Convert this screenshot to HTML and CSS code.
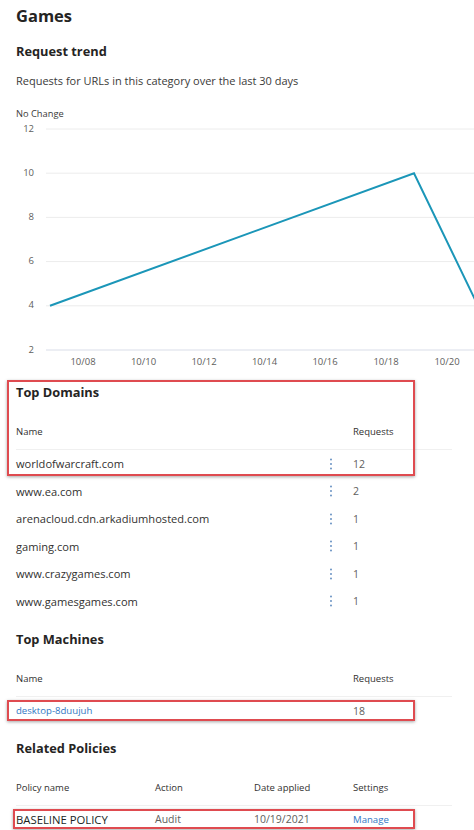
FILE: index.html
```html
<!DOCTYPE html>
<html lang="en">
<head>
<meta charset="utf-8">
<title>Games</title>
<link rel="stylesheet" href="styles.css">
</head>
<body>
<main class="page">
  <h1 class="title">Games</h1>
  <section class="trend">
    <h2 class="heading">Request trend</h2>
    <p class="subtitle">Requests for URLs in this category over the last 30 days</p>
    <div class="chart-label">No Change</div>
  </section>
  <svg class="chart" width="474" height="250" viewBox="0 0 474 250">
    <g class="grid">
      <line x1="46" y1="7" x2="474" y2="7"/>
      <line x1="46" y1="51.2" x2="474" y2="51.2"/>
      <line x1="46" y1="95.4" x2="474" y2="95.4"/>
      <line x1="46" y1="139.6" x2="474" y2="139.6"/>
      <line x1="46" y1="183.8" x2="474" y2="183.8"/>
    </g>
    <line class="axis" x1="46" y1="228" x2="474" y2="228"/>
    <g class="ylabels">
      <text x="34" y="7">12</text>
      <text x="34" y="51.2">10</text>
      <text x="34" y="95.4">8</text>
      <text x="34" y="139.6">6</text>
      <text x="34" y="183.8">4</text>
      <text x="34" y="228">2</text>
    </g>
    <g class="xlabels">
      <text x="83" y="240">10/08</text>
      <text x="143.5" y="240">10/10</text>
      <text x="204" y="240">10/12</text>
      <text x="264.5" y="240">10/14</text>
      <text x="325" y="240">10/16</text>
      <text x="386" y="240">10/18</text>
      <text x="447" y="240">10/20</text>
    </g>
    <polyline class="series" points="50,183.8 414,51.2 478,183.8"/>
  </svg>

  <section class="block domains">
    <div class="highlight hl-domains"></div>
    <h2 class="heading">Top Domains</h2>
    <div class="table cols-domains">
      <div class="row head"><span>Name</span><span></span><span>Requests</span></div>
      <div class="row"><span class="name">worldofwarcraft.com</span><span class="more"><svg width="4" height="14" viewBox="0 0 4 14"><circle cx="2" cy="2.5" r="0.9"/><circle cx="2" cy="7" r="0.9"/><circle cx="2" cy="11.5" r="0.9"/></svg></span><span class="num">12</span></div>
      <div class="row"><span class="name">www.ea.com</span><span class="more"><svg width="4" height="14" viewBox="0 0 4 14"><circle cx="2" cy="2.5" r="0.9"/><circle cx="2" cy="7" r="0.9"/><circle cx="2" cy="11.5" r="0.9"/></svg></span><span class="num">2</span></div>
      <div class="row"><span class="name">arenacloud.cdn.arkadiumhosted.com</span><span class="more"><svg width="4" height="14" viewBox="0 0 4 14"><circle cx="2" cy="2.5" r="0.9"/><circle cx="2" cy="7" r="0.9"/><circle cx="2" cy="11.5" r="0.9"/></svg></span><span class="num">1</span></div>
      <div class="row"><span class="name">gaming.com</span><span class="more"><svg width="4" height="14" viewBox="0 0 4 14"><circle cx="2" cy="2.5" r="0.9"/><circle cx="2" cy="7" r="0.9"/><circle cx="2" cy="11.5" r="0.9"/></svg></span><span class="num">1</span></div>
      <div class="row"><span class="name">www.crazygames.com</span><span class="more"><svg width="4" height="14" viewBox="0 0 4 14"><circle cx="2" cy="2.5" r="0.9"/><circle cx="2" cy="7" r="0.9"/><circle cx="2" cy="11.5" r="0.9"/></svg></span><span class="num">1</span></div>
      <div class="row"><span class="name">www.gamesgames.com</span><span class="more"><svg width="4" height="14" viewBox="0 0 4 14"><circle cx="2" cy="2.5" r="0.9"/><circle cx="2" cy="7" r="0.9"/><circle cx="2" cy="11.5" r="0.9"/></svg></span><span class="num">1</span></div>
    </div>
  </section>

  <section class="block machines">
    <h2 class="heading">Top Machines</h2>
    <div class="table cols-domains">
      <div class="row head"><span>Name</span><span></span><span>Requests</span></div>
      <div class="row marked"><div class="highlight hl-machine"></div><a class="link" href="#">desktop-8duujuh</a><span></span><span class="num">18</span></div>
    </div>
  </section>

  <section class="block policies">
    <h2 class="heading">Related Policies</h2>
    <div class="table cols-policies">
      <div class="row head"><span>Policy name</span><span>Action</span><span>Date applied</span><span>Settings</span></div>
      <div class="row marked"><div class="highlight hl-policy"></div><span class="policy">BASELINE POLICY</span><span class="num">Audit</span><span class="num">10/19/2021</span><a class="link" href="#">Manage</a></div>
    </div>
  </section>
</main>
</body>
</html>
```

FILE: styles.css
```css
* { box-sizing: border-box; }

html, body {
  margin: 0;
  padding: 0;
  background: #ffffff;
}

body {
  font-family: "Open Sans", "Noto Sans", sans-serif;
  color: #323130;
  width: 474px;
  height: 830px;
  overflow: hidden;
}

.page {
  display: flex;
  flex-direction: column;
}

.title {
  margin: 4px 16px 0;
  font-size: 16.5px;
  line-height: 24px;
  font-weight: 700;
  color: #252423;
}

.trend {
  display: flex;
  flex-direction: column;
  padding: 0 16px;
}

.heading {
  margin: 0;
  font-size: 12.8px;
  line-height: 20px;
  font-weight: 700;
  color: #252423;
}

.trend .heading {
  margin-top: 13px;
}

.subtitle {
  margin: 12px 0 0;
  font-size: 11px;
  line-height: 16px;
  color: #3b3a39;
}

.chart-label {
  margin-top: 18px;
  font-size: 9.3px;
  line-height: 14px;
  color: #3b3a39;
}

.chart {
  display: block;
  margin-top: 1px;
}

.chart .grid line {
  stroke: #ececec;
  stroke-width: 1;
}

.chart .axis {
  stroke: #d9dde8;
  stroke-width: 1;
}

.chart text {
  font-family: "Open Sans", "Noto Sans", sans-serif;
  font-size: 9.5px;
  fill: #605e5c;
  dominant-baseline: middle;
}

.chart .ylabels text { text-anchor: end; }
.chart .xlabels text { text-anchor: middle; }

.chart .series {
  fill: none;
  stroke: #1b96b8;
  stroke-width: 2;
  stroke-linejoin: miter;
}

.block {
  position: relative;
  padding: 10px 0 0 16px;
}

.machines { padding-top: 14px; }
.policies { padding-top: 13px; }

.table {
  width: 436px;
  margin-top: 12px;
  display: flex;
  flex-direction: column;
}

.row {
  display: grid;
  align-items: center;
  height: 27.5px;
  font-size: 11.1px;
  color: #323130;
}

.cols-domains .row { grid-template-columns: 305px 32px 99px; }
.cols-policies .row { grid-template-columns: 139px 99px 99px 99px; }

.row.head {
  height: 36px;
  font-size: 9.5px;
  color: #323130;
  border-bottom: 1px solid #f0f0f0;
}

.row.marked { position: relative; }

.more {
  display: flex;
  justify-content: flex-start;
  padding-left: 8px;
}

.more svg { display: block; }
.more circle { fill: #5a87bd; }

.num {
  color: #605e5c;
  font-size: 10.5px;
}

.link {
  color: #3277c4;
  text-decoration: none;
  font-size: 9.6px;
}

.policy {
  font-size: 11.3px;
  color: #201f1e;
}

.highlight {
  position: absolute;
  border: 2px solid #df4b50;
  box-shadow: 0 1px 3px rgba(0, 0, 0, 0.35);
  pointer-events: none;
}

.hl-domains {
  left: 7px;
  top: 8px;
  width: 408px;
  height: 96px;
}

.hl-machine {
  left: -9px;
  top: 3px;
  width: 408px;
  height: 21px;
}

.hl-policy {
  left: -3px;
  top: 3px;
  width: 402px;
  height: 20px;
}
```
